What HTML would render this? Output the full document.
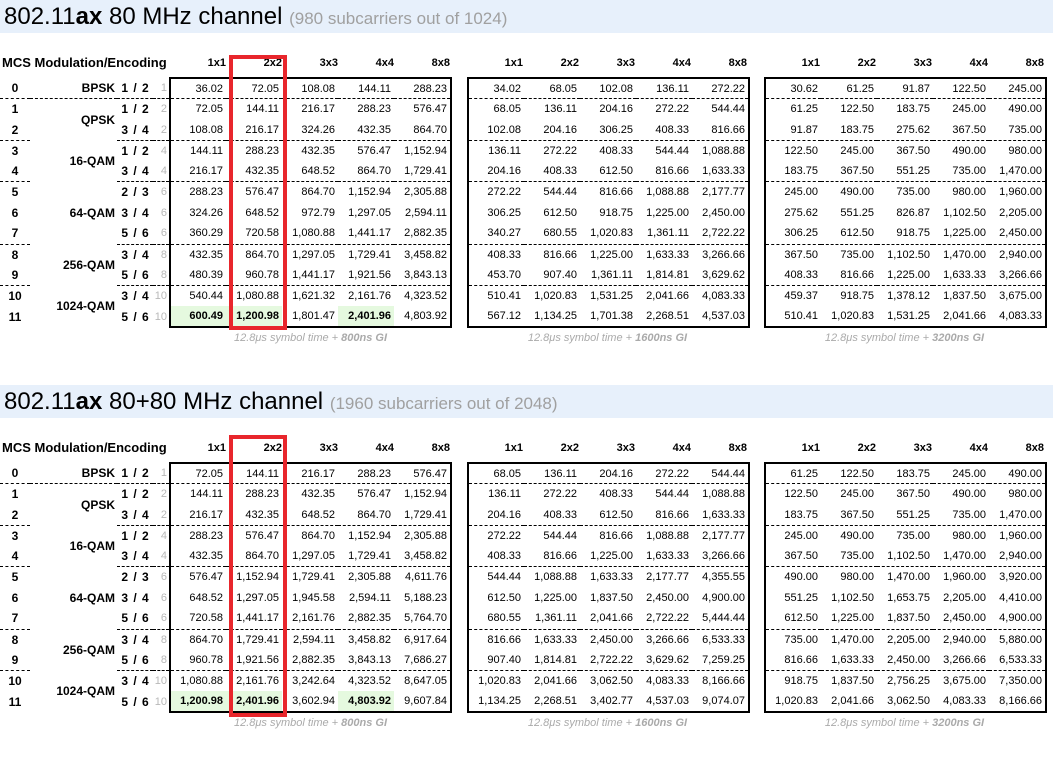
<!DOCTYPE html>
<html><head><meta charset="utf-8"><style>
body{margin:0;width:1053px;height:735px;background:#fff;position:relative;overflow:hidden;font-family:"Liberation Sans",sans-serif;color:#000}
.s{position:absolute;left:0;width:1053px;height:384px}
.band{position:absolute;left:0;top:0;width:1053px;height:33px;background:#e7f0fb}
.title{position:absolute;left:4px;top:1px;font-size:24px;white-space:nowrap;line-height:32px}
.title span{font-size:17px;color:#a0a0a0}
.hd{position:absolute;top:57px;font-size:11px;font-weight:bold;white-space:nowrap}
.hd div{position:absolute;top:0;width:56px;text-align:right}
table{position:absolute;top:77px;border-collapse:collapse;font-size:11px;table-layout:fixed}
td{height:20.75px;padding:0 3px 0 0;text-align:right;white-space:nowrap;box-sizing:border-box}
td.n{text-align:center;font-weight:bold;font-size:12px;padding:0}
td.m{font-weight:bold;font-size:12px;text-align:right;padding-right:2px}
td.r{font-weight:bold;font-size:12px;text-align:center;padding:0;word-spacing:2px}
td.g{color:#b8b8b8;font-size:11px;padding-right:2px}
tr.sep td{border-bottom:1px dashed #000}
tr.f td.d{border-top:2px solid #000}
tr.l td.d{border-bottom:2px solid #000}
td.a{border-left:2px solid #000}
td.z{border-right:2px solid #000}
td.hl{background:#e5f9df;font-weight:bold}
.cap{position:absolute;top:332px;font-size:11px;font-style:italic;color:#aaa;width:281px;text-align:center}
.red{position:absolute;left:229px;top:55px;width:58px;height:275px;border:4px solid #e8262c;box-sizing:border-box}
.mcs{position:absolute;left:2px;top:55px;font-size:13px;font-weight:bold;white-space:nowrap}
</style></head><body>

<div class="s" style="top:0">
<div class="band"></div>
<div class="title">802.11<b>ax</b> 80 MHz channel <span>(980 subcarriers out of 1024)</span></div>
<div class="mcs">MCS Modulation/Encoding</div>
<div class="hd" style="left:170px"><div style="left:0">1x1</div><div style="left:56px">2x2</div><div style="left:112px">3x3</div><div style="left:168px">4x4</div><div style="left:224px">8x8</div></div>
<div class="hd" style="left:467px"><div style="left:0">1x1</div><div style="left:56px">2x2</div><div style="left:112px">3x3</div><div style="left:168px">4x4</div><div style="left:224px">8x8</div></div>
<div class="hd" style="left:764px"><div style="left:0">1x1</div><div style="left:56px">2x2</div><div style="left:112px">3x3</div><div style="left:168px">4x4</div><div style="left:224px">8x8</div></div>

<table style="left:0;width:451px">
<colgroup><col style="width:30px"><col style="width:87px"><col style="width:36px"><col style="width:17px"><col style="width:56px"><col style="width:56px"><col style="width:56px"><col style="width:56px"><col style="width:57px"></colgroup>
<tr class="f sep"><td class="n">0</td><td class="m">BPSK</td><td class="r">1 / 2</td><td class="g">1</td><td class="d a">36.02</td><td class="d">72.05</td><td class="d">108.08</td><td class="d">144.11</td><td class="d z">288.23</td></tr>
<tr><td class="n">1</td><td class="m" rowspan="2">QPSK</td><td class="r">1 / 2</td><td class="g">2</td><td class="d a">72.05</td><td class="d">144.11</td><td class="d">216.17</td><td class="d">288.23</td><td class="d z">576.47</td></tr>
<tr class="sep"><td class="n">2</td><td class="r">3 / 4</td><td class="g">2</td><td class="d a">108.08</td><td class="d">216.17</td><td class="d">324.26</td><td class="d">432.35</td><td class="d z">864.70</td></tr>
<tr><td class="n">3</td><td class="m" rowspan="2">16-QAM</td><td class="r">1 / 2</td><td class="g">4</td><td class="d a">144.11</td><td class="d">288.23</td><td class="d">432.35</td><td class="d">576.47</td><td class="d z">1,152.94</td></tr>
<tr class="sep"><td class="n">4</td><td class="r">3 / 4</td><td class="g">4</td><td class="d a">216.17</td><td class="d">432.35</td><td class="d">648.52</td><td class="d">864.70</td><td class="d z">1,729.41</td></tr>
<tr><td class="n">5</td><td class="m" rowspan="3">64-QAM</td><td class="r">2 / 3</td><td class="g">6</td><td class="d a">288.23</td><td class="d">576.47</td><td class="d">864.70</td><td class="d">1,152.94</td><td class="d z">2,305.88</td></tr>
<tr><td class="n">6</td><td class="r">3 / 4</td><td class="g">6</td><td class="d a">324.26</td><td class="d">648.52</td><td class="d">972.79</td><td class="d">1,297.05</td><td class="d z">2,594.11</td></tr>
<tr class="sep"><td class="n">7</td><td class="r">5 / 6</td><td class="g">6</td><td class="d a">360.29</td><td class="d">720.58</td><td class="d">1,080.88</td><td class="d">1,441.17</td><td class="d z">2,882.35</td></tr>
<tr><td class="n">8</td><td class="m" rowspan="2">256-QAM</td><td class="r">3 / 4</td><td class="g">8</td><td class="d a">432.35</td><td class="d">864.70</td><td class="d">1,297.05</td><td class="d">1,729.41</td><td class="d z">3,458.82</td></tr>
<tr class="sep"><td class="n">9</td><td class="r">5 / 6</td><td class="g">8</td><td class="d a">480.39</td><td class="d">960.78</td><td class="d">1,441.17</td><td class="d">1,921.56</td><td class="d z">3,843.13</td></tr>
<tr><td class="n">10</td><td class="m" rowspan="2">1024-QAM</td><td class="r">3 / 4</td><td class="g">10</td><td class="d a">540.44</td><td class="d">1,080.88</td><td class="d">1,621.32</td><td class="d">2,161.76</td><td class="d z">4,323.52</td></tr>
<tr class="l"><td class="n">11</td><td class="r">5 / 6</td><td class="g">10</td><td class="d a hl">600.49</td><td class="d hl">1,200.98</td><td class="d">1,801.47</td><td class="d hl">2,401.96</td><td class="d z">4,803.92</td></tr>
</table>

<table style="left:467px;width:281px">
<colgroup><col style="width:56px"><col style="width:56px"><col style="width:56px"><col style="width:56px"><col style="width:57px"></colgroup>
<tr class="f sep"><td class="d a">34.02</td><td class="d">68.05</td><td class="d">102.08</td><td class="d">136.11</td><td class="d z">272.22</td></tr>
<tr><td class="d a">68.05</td><td class="d">136.11</td><td class="d">204.16</td><td class="d">272.22</td><td class="d z">544.44</td></tr>
<tr class="sep"><td class="d a">102.08</td><td class="d">204.16</td><td class="d">306.25</td><td class="d">408.33</td><td class="d z">816.66</td></tr>
<tr><td class="d a">136.11</td><td class="d">272.22</td><td class="d">408.33</td><td class="d">544.44</td><td class="d z">1,088.88</td></tr>
<tr class="sep"><td class="d a">204.16</td><td class="d">408.33</td><td class="d">612.50</td><td class="d">816.66</td><td class="d z">1,633.33</td></tr>
<tr><td class="d a">272.22</td><td class="d">544.44</td><td class="d">816.66</td><td class="d">1,088.88</td><td class="d z">2,177.77</td></tr>
<tr><td class="d a">306.25</td><td class="d">612.50</td><td class="d">918.75</td><td class="d">1,225.00</td><td class="d z">2,450.00</td></tr>
<tr class="sep"><td class="d a">340.27</td><td class="d">680.55</td><td class="d">1,020.83</td><td class="d">1,361.11</td><td class="d z">2,722.22</td></tr>
<tr><td class="d a">408.33</td><td class="d">816.66</td><td class="d">1,225.00</td><td class="d">1,633.33</td><td class="d z">3,266.66</td></tr>
<tr class="sep"><td class="d a">453.70</td><td class="d">907.40</td><td class="d">1,361.11</td><td class="d">1,814.81</td><td class="d z">3,629.62</td></tr>
<tr><td class="d a">510.41</td><td class="d">1,020.83</td><td class="d">1,531.25</td><td class="d">2,041.66</td><td class="d z">4,083.33</td></tr>
<tr class="l"><td class="d a">567.12</td><td class="d">1,134.25</td><td class="d">1,701.38</td><td class="d">2,268.51</td><td class="d z">4,537.03</td></tr>
</table>

<table style="left:764px;width:281px">
<colgroup><col style="width:56px"><col style="width:56px"><col style="width:56px"><col style="width:56px"><col style="width:57px"></colgroup>
<tr class="f sep"><td class="d a">30.62</td><td class="d">61.25</td><td class="d">91.87</td><td class="d">122.50</td><td class="d z">245.00</td></tr>
<tr><td class="d a">61.25</td><td class="d">122.50</td><td class="d">183.75</td><td class="d">245.00</td><td class="d z">490.00</td></tr>
<tr class="sep"><td class="d a">91.87</td><td class="d">183.75</td><td class="d">275.62</td><td class="d">367.50</td><td class="d z">735.00</td></tr>
<tr><td class="d a">122.50</td><td class="d">245.00</td><td class="d">367.50</td><td class="d">490.00</td><td class="d z">980.00</td></tr>
<tr class="sep"><td class="d a">183.75</td><td class="d">367.50</td><td class="d">551.25</td><td class="d">735.00</td><td class="d z">1,470.00</td></tr>
<tr><td class="d a">245.00</td><td class="d">490.00</td><td class="d">735.00</td><td class="d">980.00</td><td class="d z">1,960.00</td></tr>
<tr><td class="d a">275.62</td><td class="d">551.25</td><td class="d">826.87</td><td class="d">1,102.50</td><td class="d z">2,205.00</td></tr>
<tr class="sep"><td class="d a">306.25</td><td class="d">612.50</td><td class="d">918.75</td><td class="d">1,225.00</td><td class="d z">2,450.00</td></tr>
<tr><td class="d a">367.50</td><td class="d">735.00</td><td class="d">1,102.50</td><td class="d">1,470.00</td><td class="d z">2,940.00</td></tr>
<tr class="sep"><td class="d a">408.33</td><td class="d">816.66</td><td class="d">1,225.00</td><td class="d">1,633.33</td><td class="d z">3,266.66</td></tr>
<tr><td class="d a">459.37</td><td class="d">918.75</td><td class="d">1,378.12</td><td class="d">1,837.50</td><td class="d z">3,675.00</td></tr>
<tr class="l"><td class="d a">510.41</td><td class="d">1,020.83</td><td class="d">1,531.25</td><td class="d">2,041.66</td><td class="d z">4,083.33</td></tr>
</table>

<div class="red"></div>
<div class="cap" style="left:170px">12.8μs symbol time + <b>800ns GI</b></div>
<div class="cap" style="left:467px">12.8μs symbol time + <b>1600ns GI</b></div>
<div class="cap" style="left:764px">12.8μs symbol time + <b>3200ns GI</b></div>
</div>

<div class="s" style="top:385px">
<div class="band"></div>
<div class="title">802.11<b>ax</b> 80+80 MHz channel <span>(1960 subcarriers out of 2048)</span></div>
<div class="mcs">MCS Modulation/Encoding</div>
<div class="hd" style="left:170px"><div style="left:0">1x1</div><div style="left:56px">2x2</div><div style="left:112px">3x3</div><div style="left:168px">4x4</div><div style="left:224px">8x8</div></div>
<div class="hd" style="left:467px"><div style="left:0">1x1</div><div style="left:56px">2x2</div><div style="left:112px">3x3</div><div style="left:168px">4x4</div><div style="left:224px">8x8</div></div>
<div class="hd" style="left:764px"><div style="left:0">1x1</div><div style="left:56px">2x2</div><div style="left:112px">3x3</div><div style="left:168px">4x4</div><div style="left:224px">8x8</div></div>

<table style="left:0;width:451px">
<colgroup><col style="width:30px"><col style="width:87px"><col style="width:36px"><col style="width:17px"><col style="width:56px"><col style="width:56px"><col style="width:56px"><col style="width:56px"><col style="width:57px"></colgroup>
<tr class="f sep"><td class="n">0</td><td class="m">BPSK</td><td class="r">1 / 2</td><td class="g">1</td><td class="d a">72.05</td><td class="d">144.11</td><td class="d">216.17</td><td class="d">288.23</td><td class="d z">576.47</td></tr>
<tr><td class="n">1</td><td class="m" rowspan="2">QPSK</td><td class="r">1 / 2</td><td class="g">2</td><td class="d a">144.11</td><td class="d">288.23</td><td class="d">432.35</td><td class="d">576.47</td><td class="d z">1,152.94</td></tr>
<tr class="sep"><td class="n">2</td><td class="r">3 / 4</td><td class="g">2</td><td class="d a">216.17</td><td class="d">432.35</td><td class="d">648.52</td><td class="d">864.70</td><td class="d z">1,729.41</td></tr>
<tr><td class="n">3</td><td class="m" rowspan="2">16-QAM</td><td class="r">1 / 2</td><td class="g">4</td><td class="d a">288.23</td><td class="d">576.47</td><td class="d">864.70</td><td class="d">1,152.94</td><td class="d z">2,305.88</td></tr>
<tr class="sep"><td class="n">4</td><td class="r">3 / 4</td><td class="g">4</td><td class="d a">432.35</td><td class="d">864.70</td><td class="d">1,297.05</td><td class="d">1,729.41</td><td class="d z">3,458.82</td></tr>
<tr><td class="n">5</td><td class="m" rowspan="3">64-QAM</td><td class="r">2 / 3</td><td class="g">6</td><td class="d a">576.47</td><td class="d">1,152.94</td><td class="d">1,729.41</td><td class="d">2,305.88</td><td class="d z">4,611.76</td></tr>
<tr><td class="n">6</td><td class="r">3 / 4</td><td class="g">6</td><td class="d a">648.52</td><td class="d">1,297.05</td><td class="d">1,945.58</td><td class="d">2,594.11</td><td class="d z">5,188.23</td></tr>
<tr class="sep"><td class="n">7</td><td class="r">5 / 6</td><td class="g">6</td><td class="d a">720.58</td><td class="d">1,441.17</td><td class="d">2,161.76</td><td class="d">2,882.35</td><td class="d z">5,764.70</td></tr>
<tr><td class="n">8</td><td class="m" rowspan="2">256-QAM</td><td class="r">3 / 4</td><td class="g">8</td><td class="d a">864.70</td><td class="d">1,729.41</td><td class="d">2,594.11</td><td class="d">3,458.82</td><td class="d z">6,917.64</td></tr>
<tr class="sep"><td class="n">9</td><td class="r">5 / 6</td><td class="g">8</td><td class="d a">960.78</td><td class="d">1,921.56</td><td class="d">2,882.35</td><td class="d">3,843.13</td><td class="d z">7,686.27</td></tr>
<tr><td class="n">10</td><td class="m" rowspan="2">1024-QAM</td><td class="r">3 / 4</td><td class="g">10</td><td class="d a">1,080.88</td><td class="d">2,161.76</td><td class="d">3,242.64</td><td class="d">4,323.52</td><td class="d z">8,647.05</td></tr>
<tr class="l"><td class="n">11</td><td class="r">5 / 6</td><td class="g">10</td><td class="d a hl">1,200.98</td><td class="d hl">2,401.96</td><td class="d">3,602.94</td><td class="d hl">4,803.92</td><td class="d z">9,607.84</td></tr>
</table>

<table style="left:467px;width:281px">
<colgroup><col style="width:56px"><col style="width:56px"><col style="width:56px"><col style="width:56px"><col style="width:57px"></colgroup>
<tr class="f sep"><td class="d a">68.05</td><td class="d">136.11</td><td class="d">204.16</td><td class="d">272.22</td><td class="d z">544.44</td></tr>
<tr><td class="d a">136.11</td><td class="d">272.22</td><td class="d">408.33</td><td class="d">544.44</td><td class="d z">1,088.88</td></tr>
<tr class="sep"><td class="d a">204.16</td><td class="d">408.33</td><td class="d">612.50</td><td class="d">816.66</td><td class="d z">1,633.33</td></tr>
<tr><td class="d a">272.22</td><td class="d">544.44</td><td class="d">816.66</td><td class="d">1,088.88</td><td class="d z">2,177.77</td></tr>
<tr class="sep"><td class="d a">408.33</td><td class="d">816.66</td><td class="d">1,225.00</td><td class="d">1,633.33</td><td class="d z">3,266.66</td></tr>
<tr><td class="d a">544.44</td><td class="d">1,088.88</td><td class="d">1,633.33</td><td class="d">2,177.77</td><td class="d z">4,355.55</td></tr>
<tr><td class="d a">612.50</td><td class="d">1,225.00</td><td class="d">1,837.50</td><td class="d">2,450.00</td><td class="d z">4,900.00</td></tr>
<tr class="sep"><td class="d a">680.55</td><td class="d">1,361.11</td><td class="d">2,041.66</td><td class="d">2,722.22</td><td class="d z">5,444.44</td></tr>
<tr><td class="d a">816.66</td><td class="d">1,633.33</td><td class="d">2,450.00</td><td class="d">3,266.66</td><td class="d z">6,533.33</td></tr>
<tr class="sep"><td class="d a">907.40</td><td class="d">1,814.81</td><td class="d">2,722.22</td><td class="d">3,629.62</td><td class="d z">7,259.25</td></tr>
<tr><td class="d a">1,020.83</td><td class="d">2,041.66</td><td class="d">3,062.50</td><td class="d">4,083.33</td><td class="d z">8,166.66</td></tr>
<tr class="l"><td class="d a">1,134.25</td><td class="d">2,268.51</td><td class="d">3,402.77</td><td class="d">4,537.03</td><td class="d z">9,074.07</td></tr>
</table>

<table style="left:764px;width:281px">
<colgroup><col style="width:56px"><col style="width:56px"><col style="width:56px"><col style="width:56px"><col style="width:57px"></colgroup>
<tr class="f sep"><td class="d a">61.25</td><td class="d">122.50</td><td class="d">183.75</td><td class="d">245.00</td><td class="d z">490.00</td></tr>
<tr><td class="d a">122.50</td><td class="d">245.00</td><td class="d">367.50</td><td class="d">490.00</td><td class="d z">980.00</td></tr>
<tr class="sep"><td class="d a">183.75</td><td class="d">367.50</td><td class="d">551.25</td><td class="d">735.00</td><td class="d z">1,470.00</td></tr>
<tr><td class="d a">245.00</td><td class="d">490.00</td><td class="d">735.00</td><td class="d">980.00</td><td class="d z">1,960.00</td></tr>
<tr class="sep"><td class="d a">367.50</td><td class="d">735.00</td><td class="d">1,102.50</td><td class="d">1,470.00</td><td class="d z">2,940.00</td></tr>
<tr><td class="d a">490.00</td><td class="d">980.00</td><td class="d">1,470.00</td><td class="d">1,960.00</td><td class="d z">3,920.00</td></tr>
<tr><td class="d a">551.25</td><td class="d">1,102.50</td><td class="d">1,653.75</td><td class="d">2,205.00</td><td class="d z">4,410.00</td></tr>
<tr class="sep"><td class="d a">612.50</td><td class="d">1,225.00</td><td class="d">1,837.50</td><td class="d">2,450.00</td><td class="d z">4,900.00</td></tr>
<tr><td class="d a">735.00</td><td class="d">1,470.00</td><td class="d">2,205.00</td><td class="d">2,940.00</td><td class="d z">5,880.00</td></tr>
<tr class="sep"><td class="d a">816.66</td><td class="d">1,633.33</td><td class="d">2,450.00</td><td class="d">3,266.66</td><td class="d z">6,533.33</td></tr>
<tr><td class="d a">918.75</td><td class="d">1,837.50</td><td class="d">2,756.25</td><td class="d">3,675.00</td><td class="d z">7,350.00</td></tr>
<tr class="l"><td class="d a">1,020.83</td><td class="d">2,041.66</td><td class="d">3,062.50</td><td class="d">4,083.33</td><td class="d z">8,166.66</td></tr>
</table>

<div class="red" style="top:50px;height:282px"></div>
<div class="cap" style="left:170px">12.8μs symbol time + <b>800ns GI</b></div>
<div class="cap" style="left:467px">12.8μs symbol time + <b>1600ns GI</b></div>
<div class="cap" style="left:764px">12.8μs symbol time + <b>3200ns GI</b></div>
</div>
</body></html>
